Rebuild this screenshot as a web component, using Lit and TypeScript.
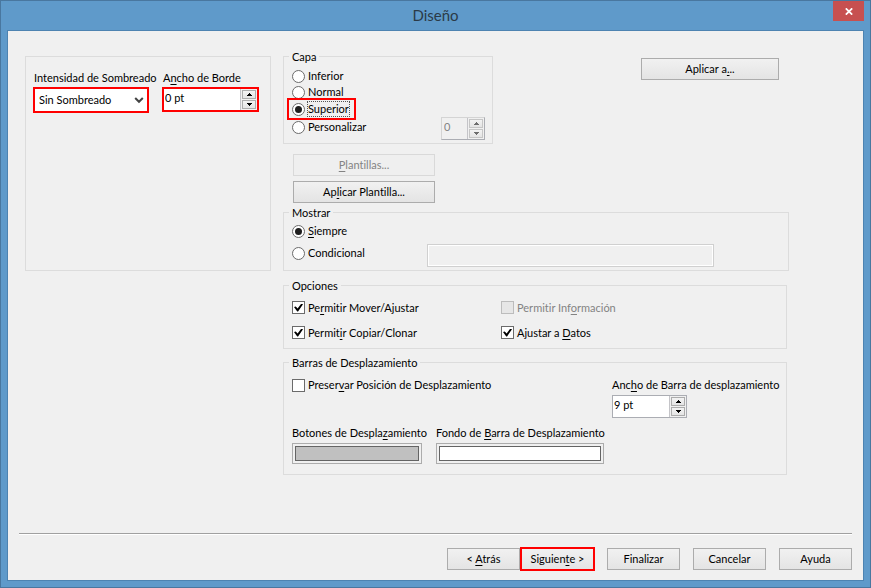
import { LitElement, html, css, svg, TemplateResult } from "lit";
import { customElement, property } from "lit/decorators.js";
import { classMap } from "lit/directives/class-map.js";

const base = css`
  *,
  *::before,
  *::after {
    box-sizing: border-box;
  }
  button,
  input,
  select {
    font: inherit;
    color: inherit;
    margin: 0;
    border-radius: 0;
    outline: none;
  }
  u {
    text-underline-offset: 2px;
    text-decoration-thickness: 1px;
    text-decoration-skip-ink: none;
  }
`;

@customElement("spin-box")
export class SpinBox extends LitElement {
  @property() value = "";
  @property() label = "";
  @property({ type: Boolean }) disabled = false;
  @property({ type: Boolean }) marked = false;

  static styles = [
    base,
    css`
      :host {
        display: block;
      }
      .box {
        display: flex;
        height: 23px;
        border: 1px solid #abadb3;
        background: #fff;
      }
      .box.marked {
        height: 25px;
        border: 2px solid #f00;
      }
      .box.disabled {
        color: #838383;
        background: #f0f0f0;
        border-color: #d4d4d4 #abadb3 #abadb3 #d4d4d4;
      }
      .text {
        flex: 1;
        min-width: 0;
        height: 16px;
        padding: 0 1px;
        border: 0;
        background: none;
      }
      .disabled .text {
        height: 17px;
        padding: 0 2px;
      }
      .arrows {
        display: flex;
        flex-direction: column;
        gap: 1px;
        width: 17px;
        padding: 1px;
        background: #f0f0f0;
        border-left: 1px solid #c4c4c8;
      }
      .arrow {
        flex: 1;
        display: flex;
        align-items: center;
        justify-content: center;
        padding: 0;
        border: 1px solid #acacac;
        background: linear-gradient(#f3f3f3, #e4e4e4);
      }
      .disabled .arrow {
        border-color: #c6c6c6;
      }
      svg {
        width: 5px;
        height: 3px;
        fill: #000;
      }
      .disabled svg {
        fill: #6d6d6d;
      }
    `,
  ];

  render() {
    return html`<div class=${classMap({ box: true, marked: this.marked, disabled: this.disabled })}>
      <input class="text" type="text" aria-label=${this.label} .value=${this.value} ?disabled=${this.disabled} />
      <div class="arrows">
        <button class="arrow" type="button" aria-label="Aumentar" ?disabled=${this.disabled}>
          <svg viewBox="0 0 5 3" shape-rendering="crispEdges"><path d="M2 0h1v1h1v1h1v1H0V2h1V1h1z" /></svg>
        </button>
        <button class="arrow" type="button" aria-label="Reducir" ?disabled=${this.disabled}>
          <svg viewBox="0 0 5 3" shape-rendering="crispEdges"><path d="M0 0h5v1H4v1H3v1H2V2H1V1H0z" /></svg>
        </button>
      </div>
    </div>`;
  }
}

@customElement("app-root")
export class AppRoot extends LitElement {
  static styles = [
    base,
    css`
      :host {
        display: block;
        font: 11px/14px Lato, "Liberation Sans", sans-serif;
        font-variant-ligatures: none;
        color: #000;
      }
      .window {
        display: flex;
        flex-direction: column;
        min-height: 100vh;
        border: 1px solid #49779f;
        background: #5f9aca;
      }
      .titlebar {
        display: grid;
        grid-template-columns: 1fr auto 1fr;
        height: 29px;
        padding: 0 6px;
      }
      .title {
        grid-column: 2;
        margin: 0;
        font: 400 15px/29px Lato, "Open Sans", sans-serif;
        color: #2b3a47;
      }
      .close {
        justify-self: end;
        display: flex;
        align-items: center;
        justify-content: center;
        width: 31px;
        height: 20px;
        padding: 0;
        border: 0;
        background: #c75050;
      }
      .close svg {
        width: 8px;
        height: 7px;
      }
      .client {
        flex: 1;
        display: flex;
        flex-direction: column;
        margin: 0 6px 6px;
        border: 1px solid #4d83b1;
        background: #f0f0f0;
      }
      .content {
        flex: 1;
        display: grid;
        grid-template-columns: 246px 1fr;
        gap: 12px;
        align-items: start;
        padding: 19px 74px 16px 17px;
      }
      .panel {
        display: flex;
        gap: 13px;
        min-height: 215px;
        margin-top: 6px;
        padding: 14px 7px;
        border: 1px solid #dcdcdc;
      }
      .field {
        display: flex;
        flex-direction: column;
        gap: 2px;
        white-space: nowrap;
      }
      .shade {
        width: 116px;
      }
      .edge {
        width: 97px;
      }
      .caption {
        padding-left: 1px;
      }
      .combo {
        display: grid;
        align-items: center;
        height: 26px;
        border: 2px solid #f00;
        background: #fff;
      }
      .combo > * {
        grid-area: 1 / 1;
      }
      .combo select {
        appearance: none;
        width: 100%;
        height: 22px;
        padding: 0 16px 0 4px;
        border: 0;
        background: none;
      }
      .chevron {
        justify-self: end;
        width: 10px;
        height: 7px;
        margin-right: 3px;
        pointer-events: none;
      }
      .main {
        display: flex;
        flex-direction: column;
      }
      .top {
        display: flex;
        justify-content: space-between;
        align-items: flex-start;
      }
      fieldset {
        min-width: 0;
        margin: 0;
        padding: 0 5px;
        border: 1px solid #dcdcdc;
      }
      legend {
        height: 13px;
        padding: 0 3px;
        line-height: 13px;
      }
      .layer {
        width: 210px;
      }
      .layer-body {
        display: flex;
        align-items: flex-end;
        justify-content: space-between;
        padding: 5px 2px 3px 0;
      }
      .layer-list {
        display: grid;
        grid-template-rows: 16px 16px 18px 18px;
        justify-items: start;
        padding-bottom: 4px;
      }
      .layer-spin {
        width: 44px;
      }
      .choice {
        display: flex;
        align-items: center;
        gap: 3px;
        padding: 0 5px 0 3px;
        white-space: nowrap;
      }
      .choice.off {
        color: #838383;
      }
      .choice.marked {
        height: 18px;
        outline: 2px solid #f00;
      }
      .marked .name {
        outline: 1px dotted #555;
      }
      .choice input {
        appearance: none;
        display: grid;
        place-items: center;
        flex: none;
        width: 13px;
        height: 13px;
        border: 1px solid #6b6b6b;
        background: #fff;
      }
      .choice input[type="radio"] {
        border-radius: 50%;
      }
      .choice input[type="radio"]:checked::before {
        content: "";
        width: 7px;
        height: 7px;
        border-radius: 50%;
        background: #1e1e1e;
      }
      .choice input[type="checkbox"]:checked::before {
        content: "";
        width: 9px;
        height: 8px;
        background: #000;
        clip-path: polygon(0 45%, 20% 38%, 40% 62%, 82% 0, 100% 8%, 45% 100%, 36% 100%);
      }
      .choice.off input {
        border-color: #bcbcbc;
        background: #e6e6e6;
      }
      .btn {
        height: 22px;
        padding: 0 8px;
        border: 1px solid #acacac;
        background: linear-gradient(#f1f1f1, #e4e4e4);
        line-height: 14px;
        white-space: nowrap;
      }
      .btn:disabled {
        color: #838383;
        border-color: #d9d9d9;
        background: #efefef;
      }
      .apply {
        width: 138px;
        margin: 8px 10px 0 0;
      }
      .templates {
        display: flex;
        flex-direction: column;
        gap: 5px;
        width: 142px;
        margin: 10px 0 3px 10px;
      }
      .show-body {
        display: grid;
        grid-template-columns: 138px 1fr;
        grid-auto-rows: minmax(18px, auto);
        align-items: start;
        row-gap: 4px;
        padding: 3px 69px 3px 0;
      }
      .show-body .choice {
        height: 18px;
      }
      .condition {
        grid-column: 2;
        width: 100%;
        height: 23px;
        border: 1px solid #d0d0d0;
        background: #f0f0f0;
        box-shadow: inset 0 0 0 1px #fff;
      }
      .options,
      .scroll {
        margin: 8px 2px 0 0;
      }
      .options-body {
        display: grid;
        grid-template-columns: 209px 1fr;
        grid-auto-rows: 25px;
        padding: 3px 0;
      }
      .scroll {
        margin-top: 7px;
      }
      .scroll-body {
        display: flex;
        flex-direction: column;
        gap: 8px;
        padding: 9px 4px 10px 0;
      }
      .scroll-row {
        display: flex;
        align-items: flex-start;
        justify-content: space-between;
      }
      .scroll-width {
        gap: 3px;
        width: 165px;
      }
      .scroll-width spin-box {
        width: 75px;
      }
      .scroll-width .caption,
      .colors .caption {
        padding: 0;
      }
      .colors {
        display: flex;
        gap: 14px;
        padding-left: 3px;
      }
      .colors .field {
        gap: 3px;
      }
      .buttons-color {
        width: 130px;
      }
      .track-color {
        width: 168px;
      }
      .swatch {
        width: 100%;
        height: 21px;
        padding: 2px;
        border: 1px solid #acacac;
        background: #f0f0f0;
      }
      .fill {
        display: block;
        height: 15px;
        border: 1px solid #646464;
        background: #fff;
      }
      .fill.gray {
        background: #c0c0c0;
      }
      .footer {
        display: flex;
        justify-content: flex-end;
        gap: 13px;
        margin: 0 11px;
        padding: 14px 0 10px;
        border-top: 1px solid #a0a0a0;
        box-shadow: inset 0 1px #fff;
      }
      .footer .btn {
        width: 73px;
        padding: 0;
      }
      .steps {
        display: flex;
        gap: 1px;
      }
      .footer .next {
        outline: 2px solid #f00;
        outline-offset: -1px;
      }
    `,
  ];

  private choice(
    type: "radio" | "checkbox",
    group: string,
    text: TemplateResult | string,
    checked = false,
    extra: { marked?: boolean; off?: boolean } = {}
  ) {
    return html`<label class=${classMap({ choice: true, marked: !!extra.marked, off: !!extra.off })}>
      <input type=${type} name=${group} .checked=${checked} ?disabled=${!!extra.off} />
      <span class="name">${text}</span>
    </label>`;
  }

  render() {
    return html`
      <div class="window">
        <header class="titlebar">
          <h1 class="title">Diseño</h1>
          <button class="close" type="button" aria-label="Cerrar">
            <svg viewBox="0 0 8 7">${svg`<path d="M.8.3 7.2 6.7M7.2.3.8 6.7" stroke="#fff" stroke-width="1.7" fill="none" />`}</svg>
          </button>
        </header>
        <div class="client">
          <main class="content">
            <section class="panel">
              <div class="field shade">
                <label class="caption" for="shade">Intensidad de Sombreado</label>
                <div class="combo">
                  <select id="shade">
                    <option>Sin Sombreado</option>
                  </select>
                  <svg class="chevron" viewBox="0 0 10 7"><path d="M1.2 1 5 4.8 8.8 1" stroke="#444" stroke-width="2" fill="none" /></svg>
                </div>
              </div>
              <div class="field edge">
                <span class="caption">A<u>n</u>cho de Borde</span>
                <spin-box label="Ancho de Borde" value="0 pt" marked></spin-box>
              </div>
            </section>
            <div class="main">
              <div class="top">
                <fieldset class="layer">
                  <legend>Capa</legend>
                  <div class="layer-body">
                    <div class="layer-list">
                      ${this.choice("radio", "layer", "Inferior")}
                      ${this.choice("radio", "layer", "Normal")}
                      ${this.choice("radio", "layer", "Superior", true, { marked: true })}
                      ${this.choice("radio", "layer", "Personalizar")}
                    </div>
                    <spin-box class="layer-spin" label="Personalizar" value="0" disabled></spin-box>
                  </div>
                </fieldset>
                <button class="btn apply" type="button">Aplicar a<u>.</u>..</button>
              </div>
              <div class="templates">
                <button class="btn" type="button" disabled><u>P</u>lantillas...</button>
                <button class="btn" type="button">Ap<u>l</u>icar Plantilla...</button>
              </div>
              <fieldset>
                <legend>Mostrar</legend>
                <div class="show-body">
                  ${this.choice("radio", "show", html`<u>S</u>iempre`, true)}
                  <span></span>
                  ${this.choice("radio", "show", "Condicional")}
                  <input class="condition" type="text" aria-label="Condicional" disabled />
                </div>
              </fieldset>
              <fieldset class="options">
                <legend>Opciones</legend>
                <div class="options-body">
                  ${this.choice("checkbox", "move", html`Pe<u>r</u>mitir Mover/Ajustar`, true)}
                  ${this.choice("checkbox", "info", html`Permitir Inf<u>o</u>rmación`, false, { off: true })}
                  ${this.choice("checkbox", "copy", html`Permit<u>i</u>r Copiar/Clonar`, true)}
                  ${this.choice("checkbox", "fit", html`Ajustar a <u>D</u>atos`, true)}
                </div>
              </fieldset>
              <fieldset class="scroll">
                <legend>Barras de Desplazamiento</legend>
                <div class="scroll-body">
                  <div class="scroll-row">
                    ${this.choice("checkbox", "keep", html`Preser<u>v</u>ar Posición de Desplazamiento`)}
                    <div class="field scroll-width">
                      <span class="caption">Anc<u>h</u>o de Barra de desplazamiento</span>
                      <spin-box label="Ancho de Barra de desplazamiento" value="9 pt"></spin-box>
                    </div>
                  </div>
                  <div class="colors">
                    <div class="field buttons-color">
                      <label class="caption" for="buttons-color">Botones de Despla<u>z</u>amiento</label>
                      <button class="swatch" id="buttons-color" type="button"><span class="fill gray"></span></button>
                    </div>
                    <div class="field track-color">
                      <label class="caption" for="track-color">Fondo de <u>B</u>arra de Desplazamiento</label>
                      <button class="swatch" id="track-color" type="button"><span class="fill"></span></button>
                    </div>
                  </div>
                </div>
              </fieldset>
            </div>
          </main>
          <footer class="footer">
            <div class="steps">
              <button class="btn" type="button">&lt; <u>A</u>trás</button>
              <button class="btn next" type="button">Siguien<u>t</u>e &gt;</button>
            </div>
            <button class="btn" type="button">Finalizar</button>
            <button class="btn" type="button">Cancelar</button>
            <button class="btn" type="button">Ayuda</button>
          </footer>
        </div>
      </div>
    `;
  }
}
